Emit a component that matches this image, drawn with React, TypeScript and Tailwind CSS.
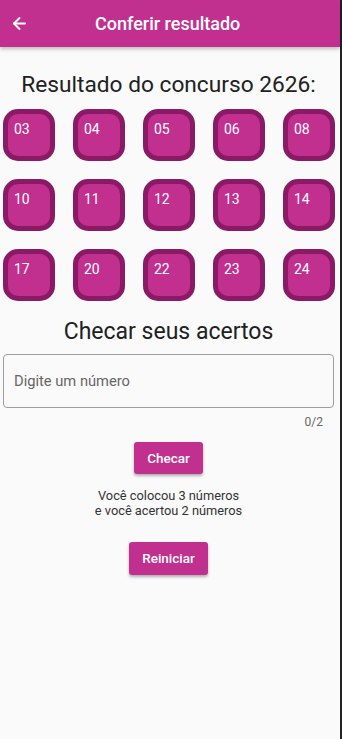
import { ArrowLeft } from 'lucide-react';

const numbers = ['03', '04', '05', '06', '08', '10', '11', '12', '13', '14', '17', '20', '22', '23', '24'];

export default function App() {
  return (
    <div className="min-h-screen w-[342px] bg-[#fafafa] font-['Roboto',sans-serif] flex flex-col border-r-2 border-[#222]">
      {/* App bar */}
      <div className="h-[47px] bg-[#c2308f] flex items-center px-[10px] shadow-[0_2px_4px_rgba(0,0,0,0.25)] z-10">
        <ArrowLeft className="w-[19px] h-[19px] text-white" strokeWidth={2.4} />
        <h1 className="ml-[66px] text-white text-[18px] font-medium">Conferir resultado</h1>
      </div>

      <div className="w-[337px] flex flex-col">
        <h2 className="mt-[24px] text-center text-[22.7px] leading-[28px] text-[#212121]">Resultado do concurso 2626:</h2>

        {/* Numbers */}
        <div className="mt-[10px] ml-[3px] grid grid-cols-[repeat(5,52px)] gap-[18px]">
          {numbers.map((n) => (
            <div
              key={n}
              className="w-[52px] h-[52px] rounded-[15px] border-[5px] border-[#8b1a66] bg-[#c2308f] pl-[6px] pt-[7px] text-white text-[14px] leading-[16px]"
            >
              {n}
            </div>
          ))}
        </div>

        <h2 className="mt-[16px] text-center text-[23px] leading-[30px] text-[#212121]">Checar seus acertos</h2>

        {/* Input */}
        <div className="mt-[7px] mx-[3px] w-[331px] h-[54px] border border-[#9e9e9e] rounded-[4px] flex items-center px-[10px]">
          <span className="text-[14.7px] text-[#666]">Digite um número</span>
        </div>
        <div className="mt-[7px] w-[323px] text-right text-[12px] leading-[14px] text-[#666]">0/2</div>

        <div className="mt-[13px] flex justify-center">
          <button className="w-[69px] h-[32px] bg-[#c2308f] rounded-[3px] text-white text-[13.5px] font-medium shadow-[0_2px_3px_rgba(0,0,0,0.3)]">
            Checar
          </button>
        </div>

        <p className="mt-[14px] text-center text-[12.8px] leading-[15px] text-[#333]">
          Você colocou 3 números
          <br />e você acertou 2 números
        </p>

        <div className="mt-[24px] flex justify-center">
          <button className="w-[79px] h-[33px] bg-[#c2308f] rounded-[3px] text-white text-[13.5px] font-medium shadow-[0_2px_3px_rgba(0,0,0,0.3)]">
            Reiniciar
          </button>
        </div>
      </div>
    </div>
  );
}
